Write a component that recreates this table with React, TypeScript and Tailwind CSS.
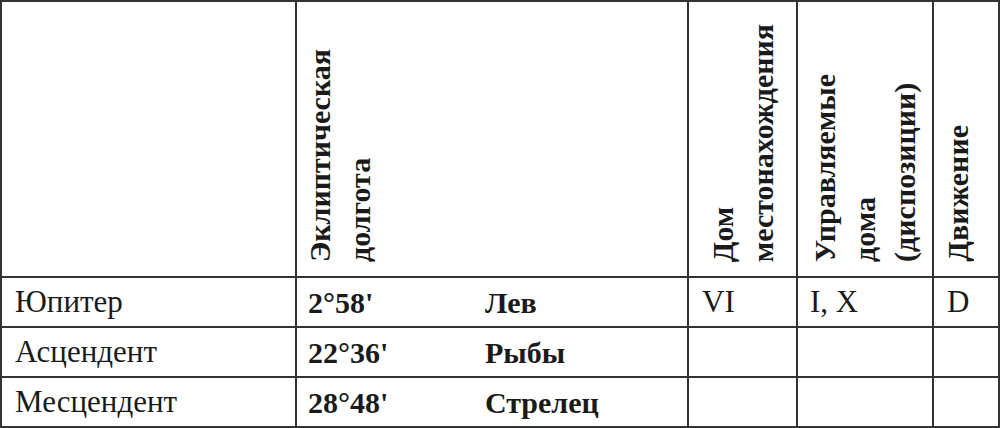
import React from 'react';

interface PlanetRow {
  name: string;
  degree: string;
  sign: string;
  house: string;
  rules: string;
  motion: string;
}

const rows: PlanetRow[] = [
  { name: 'Юпитер', degree: '2°58\'', sign: 'Лев', house: 'VI', rules: 'I, X', motion: 'D' },
  { name: 'Асцендент', degree: '22°36\'', sign: 'Рыбы', house: '', rules: '', motion: '' },
  { name: 'Месцендент', degree: '28°48\'', sign: 'Стрелец', house: '', rules: '', motion: '' },
];

// rotated header text, reads bottom to top
const VerticalHeader = ({ lines, className }: { lines: string[]; className?: string }) => (
  <div className={`flex h-full items-end pb-[14px] ${className ?? ''}`}>
    <div className="[writing-mode:vertical-rl] rotate-180 whitespace-nowrap font-['Liberation_Serif','Times_New_Roman',serif] font-bold text-[30px] leading-[40px]">
      {lines.map((l, i) => (
        <React.Fragment key={i}>
          {l}
          {i < lines.length - 1 && <br />}
        </React.Fragment>
      ))}
    </div>
  </div>
);

export default function App() {
  const cell = 'border-r-2 border-b-2 border-[#333] flex items-center';

  return (
    <div className="w-[1000px] h-[428px] bg-white text-[#1a1a1a] overflow-hidden font-['Liberation_Serif','Times_New_Roman',serif]">
      <div className="grid grid-cols-[295px_176px_216px_109px_136px_66px] grid-rows-[276px_50px_50px_50px] border-t-2 border-l-2 border-[#333]">
        {/* header */}
        <div className="border-r-2 border-b-2 border-[#333]" />
        <div className="col-span-2 border-r-2 border-b-2 border-[#333]">
          <VerticalHeader lines={['Эклиптическая', 'долгота']} className="pl-[3px]" />
        </div>
        <div className="border-r-2 border-b-2 border-[#333]">
          <VerticalHeader lines={['Дом', 'местонахождения']} className="pl-[14px]" />
        </div>
        <div className="border-r-2 border-b-2 border-[#333]">
          <VerticalHeader lines={['Управляемые', 'дома', '(диспозиции)']} className="pl-[7px]" />
        </div>
        <div className="border-r-2 border-b-2 border-[#333]">
          <VerticalHeader lines={['Движение']} className="pl-[4px]" />
        </div>

        {/* body */}
        {rows.map(r => (
          <React.Fragment key={r.name}>
            <div className={`${cell} pl-[13px] text-[31px]`}>{r.name}</div>
            <div className="border-b-2 border-[#333] flex items-center pl-[11px] text-[30px] font-bold">
              {r.degree}
            </div>
            <div className={`${cell} pl-3 text-[30px] font-bold`}>{r.sign}</div>
            <div className={`${cell} pl-[13px] text-[31px]`}>{r.house}</div>
            <div className={`${cell} pl-3 text-[31px]`}>{r.rules}</div>
            <div className={`${cell} pl-[13px] text-[31px]`}>{r.motion}</div>
          </React.Fragment>
        ))}
      </div>
    </div>
  );
}
